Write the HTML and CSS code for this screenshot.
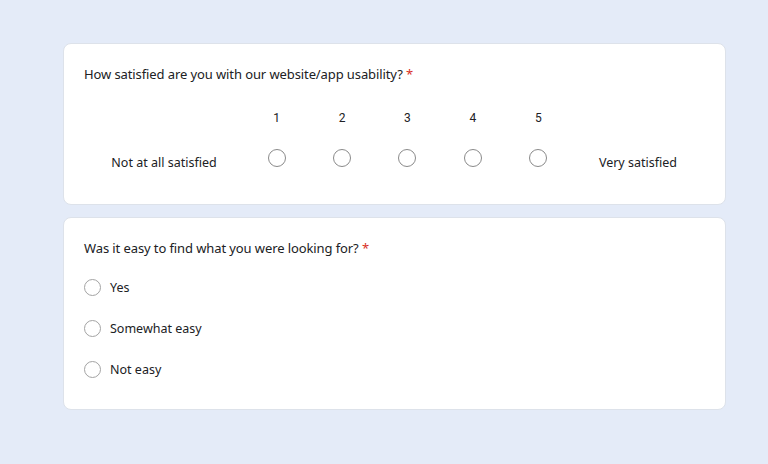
FILE: index.html
```html
<!DOCTYPE html>
<html lang="en">
<head>
    <meta charset="UTF-8">
    <meta name="viewport" content="width=device-width, initial-scale=1.0">
    <title>Usability survey</title>
    <link rel="stylesheet" href="styles.css">
</head>
<body>

<div id="survey">
    <!-- Question 1: linear scale -->
    <div class="card scale-card">
        <div class="question">How satisfied are you with our website/app usability? <span class="req">*</span></div>
        <div class="scale">
            <div class="scale-label"></div>
            <div class="scale-col num">1</div>
            <div class="scale-col num">2</div>
            <div class="scale-col num">3</div>
            <div class="scale-col num">4</div>
            <div class="scale-col num">5</div>
            <div class="scale-label"></div>

            <div class="scale-label low">Not at all satisfied</div>
            <div class="scale-col"><span class="radio"></span></div>
            <div class="scale-col"><span class="radio"></span></div>
            <div class="scale-col"><span class="radio"></span></div>
            <div class="scale-col"><span class="radio"></span></div>
            <div class="scale-col"><span class="radio"></span></div>
            <div class="scale-label high">Very satisfied</div>
        </div>
    </div>

    <!-- Question 2: multiple choice -->
    <div class="card choice-card">
        <div class="question">Was it easy to find what you were looking for? <span class="req">*</span></div>
        <div class="option"><span class="radio small"></span>Yes</div>
        <div class="option"><span class="radio small"></span>Somewhat easy</div>
        <div class="option"><span class="radio small"></span>Not easy</div>
    </div>
</div>

</body>
</html>
```

FILE: styles.css
```css
body, html {
    margin: 0;
    padding: 0;
    width: 100%;
    height: 100%;
    overflow: hidden;
    background-color: #e4ebf8;
    font-family: "Noto Sans", "Open Sans", sans-serif;
    color: #202124;
}

#survey {
    width: 663px;
    margin-left: 63px;
    padding-top: 43px;
    display: flex;
    flex-direction: column;
    gap: 12px;
}

.card {
    background: #fff;
    border: 1px solid #dde2ea;
    border-radius: 8px;
    box-sizing: border-box;
    padding: 20px 20px 0 20px;
}

.scale-card {
    height: 162px;
}

.choice-card {
    height: 193px;
}

.question {
    font-size: 13px;
    line-height: 20px;
    letter-spacing: -0.1px;
}

.req {
    color: #d93025;
}

/* linear scale grid */
.scale {
    display: grid;
    grid-template-columns: 160px repeat(5, 65.4px) 134px;
    grid-template-rows: 24px 24px;
    row-gap: 16px;
    margin-top: 22px;
    font-size: 12.5px;
}

.scale-col,
.scale-label {
    display: flex;
    align-items: center;
    justify-content: center;
}

.num {
    font-family: Roboto, sans-serif;
    font-size: 12px;
}

.low, .high {
    padding-top: 8px;
    box-sizing: border-box;
}

.radio {
    display: inline-block;
    width: 16px;
    height: 16px;
    border: 1.5px solid #8a8a8a;
    border-radius: 50%;
    box-sizing: content-box;
}

.radio.small {
    width: 15px;
    height: 15px;
    border-color: #a3a3a3;
    margin-right: 9px;
}

.option {
    display: flex;
    align-items: center;
    font-size: 12.5px;
    height: 20px;
    margin-top: 21px;
}

.choice-card .question {
    margin-bottom: -2px;
}
```
